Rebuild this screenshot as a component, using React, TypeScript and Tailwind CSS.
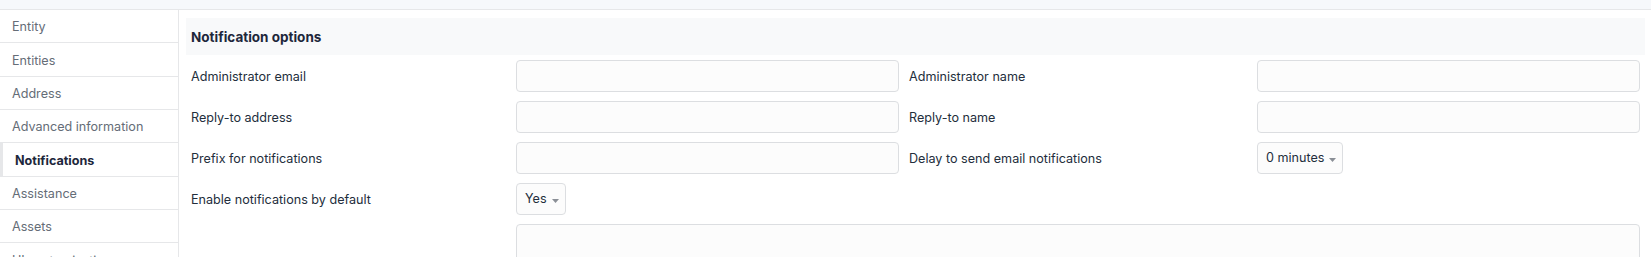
const tabs = [
  "Entity",
  "Entities",
  "Address",
  "Advanced information",
  "Notifications",
  "Assistance",
  "Assets",
  "UI customization",
];

const Caret = () => (
  <svg width="7" height="4" viewBox="0 0 7 4" className="ml-[5px] mt-[2px]">
    <path d="M0 0h7L3.5 4z" fill="#8a8f96" />
  </svg>
);

const Field = () => (
  <div className="h-[32px] rounded-[4px] border border-[#dcdee1] bg-[#fcfcfc]" />
);

const Select = ({ value }: { value: string }) => (
  <div className="flex h-[32px] w-fit items-center rounded-[4px] border border-[#dcdee1] bg-[#fcfcfc] pl-[8px] pr-[6px] pt-[1px] text-[#232e3c]">
    <span>{value}</span>
    <Caret />
  </div>
);

const Label = ({ text, wide }: { text: string; wide?: boolean }) => (
  <div className={wide ? "flex items-center pl-[10px] pt-[2px]" : "flex items-center pl-[5px] pt-[2px]"}>
    {text}
  </div>
);

export default function App() {
  return (
    <div className="min-h-screen bg-white font-['Inter','Liberation_Sans',sans-serif] text-[12.6px] text-[#232e3c]">
      <div className="h-[10px] border-b border-[#e6e7e9] bg-[#f6f8fb]" />

      <div className="flex">
        {/* Tabs */}
        <nav className="w-[179px] shrink-0 border-r border-[#e6e7e9]">
          {tabs.map((t) =>
            t === "Notifications" ? (
              <div
                key={t}
                className="flex h-[33.33px] items-center border-b border-l-[3px] border-[#e6e7e9] bg-white pl-[12px] pt-[3px] font-bold text-[#1d273b]"
              >
                {t}
              </div>
            ) : (
              <div
                key={t}
                className="flex h-[33.33px] items-center border-b border-[#e6e7e9] pl-[12px] pt-[3px] text-[#656d77]"
              >
                {t}
              </div>
            )
          )}
        </nav>

        {/* Form */}
        <main className="flex-1 pl-[7px] pr-[6px] pt-2">
          <div className="flex h-[37px] items-center bg-[#f8f9fa] pl-[5px] pt-[1px] text-[13.5px] font-bold text-[#1d273b]">
            Notification options
          </div>

          <div className="mt-[5px] grid grid-cols-[330px_383px_358px_383px] gap-y-[9px]">
            <Label text="Administrator email" />
            <Field />
            <Label text="Administrator name" wide />
            <Field />

            <Label text="Reply-to address" />
            <Field />
            <Label text="Reply-to name" wide />
            <Field />

            <Label text="Prefix for notifications" />
            <Field />
            <Label text="Delay to send email notifications" wide />
            <Select value="0 minutes" />

            <Label text="Enable notifications by default" />
            <Select value="Yes" />
            <div />
            <div />

            <div />
            <div className="col-span-3 h-[70px] rounded-[4px] border border-[#dcdee1] bg-[#fcfcfc]" />
          </div>
        </main>
      </div>
    </div>
  );
}
